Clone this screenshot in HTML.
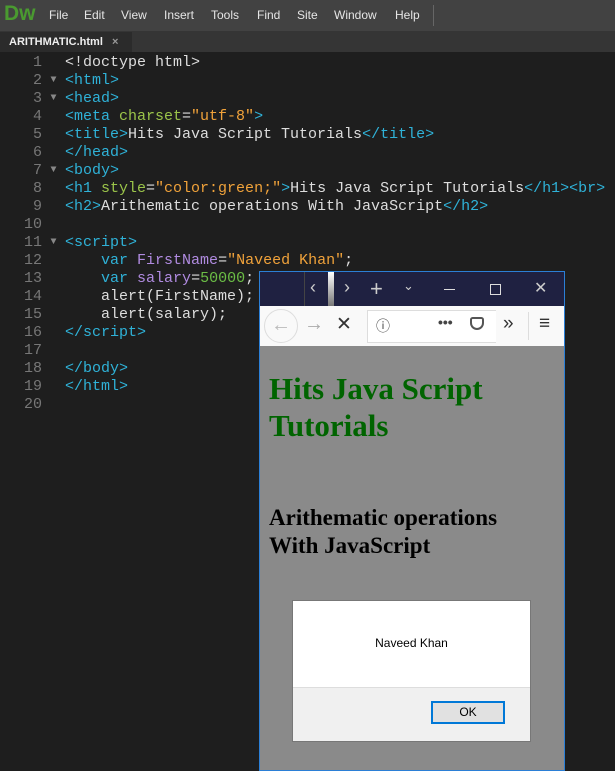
<!DOCTYPE html>
<html><head><style>
body{margin:0;width:615px;height:766px;background:#1e1e1e;position:relative;overflow:hidden;font-family:"Liberation Sans",sans-serif}
.menu{position:absolute;left:0;top:0;width:615px;height:31px;background:#424242}
.menu span{position:absolute;top:8px;font-size:12px;color:#e6e6e6}
.tabs{position:absolute;top:31px;left:0;width:615px;height:21px;background:#353535}
.tab{position:absolute;left:0;top:1px;width:132px;height:20px;background:#2b2b2b;color:#eee;font-size:11px;font-weight:bold;line-height:20px;padding-left:9px;box-sizing:border-box}
.code{position:absolute;left:0;top:54px;font-family:"Liberation Mono",monospace;font-size:15px;color:#ddd}
.code div{height:18px;line-height:18px;white-space:pre}
.ln{display:inline-block;width:42px;text-align:right;color:#777}
.ar{display:inline-block;width:23px;height:18px;color:#888;font-size:10px;line-height:18px;text-align:center;vertical-align:top}
.t{color:#2fb2d8}.a{color:#9bc44a}.s{color:#f0a23a}.v{color:#b08be0}.n{color:#6bbd45}
.win{position:absolute;left:259px;top:271px;width:306px;height:500px;border:1px solid #2b7fd6;box-sizing:border-box;background:#8a8a8a;overflow:hidden}
.tb{position:absolute;left:0;top:0;width:100%;height:34px;background:#1f2141}
.nav{position:absolute;left:0;top:34px;width:100%;height:40px;background:#f9f9f9}
.ic{position:absolute;color:#ccc;font-size:18px}
h1,h2{font-family:"Liberation Serif",serif;margin:0;position:absolute;left:9px}
.dlg{position:absolute;left:292px;top:600px;width:239px;height:142px;background:#f0f0f0;border:1px solid #777;box-sizing:border-box}
</style></head><body>
<div class="menu">
<span style="left:4px;top:2px;font-size:21px;color:#4a9a30;font-weight:bold">Dw</span>
<span style="left:49px">File</span><span style="left:84px">Edit</span><span style="left:121px">View</span><span style="left:164px">Insert</span><span style="left:211px">Tools</span><span style="left:257px">Find</span><span style="left:297px">Site</span><span style="left:334px">Window</span><span style="left:395px">Help</span>
<div style="position:absolute;left:433px;top:5px;width:1px;height:21px;background:#666"></div>
</div>
<div class="tabs"><div class="tab">ARITHMATIC.html <span style="color:#999;margin-left:6px">×</span></div></div>
<div class="code"><div><span class="ln">1</span><span class="ar"></span>&lt;!doctype html&gt;</div>
<div><span class="ln">2</span><span class="ar">▼</span><span class="t">&lt;html&gt;</span></div>
<div><span class="ln">3</span><span class="ar">▼</span><span class="t">&lt;head&gt;</span></div>
<div><span class="ln">4</span><span class="ar"></span><span class="t">&lt;meta </span><span class="a">charset</span>=<span class="s">"utf-8"</span><span class="t">&gt;</span></div>
<div><span class="ln">5</span><span class="ar"></span><span class="t">&lt;title&gt;</span>Hits Java Script Tutorials<span class="t">&lt;/title&gt;</span></div>
<div><span class="ln">6</span><span class="ar"></span><span class="t">&lt;/head&gt;</span></div>
<div><span class="ln">7</span><span class="ar">▼</span><span class="t">&lt;body&gt;</span></div>
<div><span class="ln">8</span><span class="ar"></span><span class="t">&lt;h1 </span><span class="a">style</span>=<span class="s">"color:green;"</span><span class="t">&gt;</span>Hits Java Script Tutorials<span class="t">&lt;/h1&gt;&lt;br&gt;</span></div>
<div><span class="ln">9</span><span class="ar"></span><span class="t">&lt;h2&gt;</span>Arithematic operations With JavaScript<span class="t">&lt;/h2&gt;</span></div>
<div><span class="ln">10</span><span class="ar"></span></div>
<div><span class="ln">11</span><span class="ar">▼</span><span class="t">&lt;script&gt;</span></div>
<div><span class="ln">12</span><span class="ar"></span>    <span class="t">var</span> <span class="v">FirstName</span>=<span class="s">"Naveed Khan"</span>;</div>
<div><span class="ln">13</span><span class="ar"></span>    <span class="t">var</span> <span class="v">salary</span>=<span class="n">50000</span>;</div>
<div><span class="ln">14</span><span class="ar"></span>    alert(FirstName);</div>
<div><span class="ln">15</span><span class="ar"></span>    alert(salary);</div>
<div><span class="ln">16</span><span class="ar"></span><span class="t">&lt;/script&gt;</span></div>
<div><span class="ln">17</span><span class="ar"></span></div>
<div><span class="ln">18</span><span class="ar"></span><span class="t">&lt;/body&gt;</span></div>
<div><span class="ln">19</span><span class="ar"></span><span class="t">&lt;/html&gt;</span></div>
<div><span class="ln">20</span><span class="ar"></span></div></div>
<div class="win">
<div class="tb">
<div style="position:absolute;left:44px;top:0;width:1px;height:34px;background:#444"></div>
<div style="position:absolute;left:68px;top:0;width:6px;height:34px;background:linear-gradient(#fff,#777)"></div>
<span class="ic" style="left:50px;top:5px">‹</span><span class="ic" style="left:84px;top:5px">›</span>
<span class="ic" style="left:110px;top:4px;font-size:22px">+</span><span class="ic" style="left:143px;top:6px;font-size:13px">⌄</span>
<div style="position:absolute;left:184px;top:17px;width:11px;height:1px;background:#ddd"></div>
<div style="position:absolute;left:230px;top:12px;width:9px;height:9px;border:1px solid #ddd"></div>
<span class="ic" style="left:274px;top:6px;font-size:16px">✕</span>
</div>
<div class="nav">
<div style="position:absolute;left:4px;top:3px;width:32px;height:32px;border:1px solid #ddd;border-radius:50%;color:#bbb;font-size:20px;text-align:center;line-height:30px">←</div>
<span style="position:absolute;left:44px;top:7px;color:#aaa;font-size:20px">→</span>
<span style="position:absolute;left:76px;top:7px;color:#333;font-size:19px">✕</span>
<div style="position:absolute;left:107px;top:4px;width:128px;height:31px;background:#fff;border:1px solid #ddd;border-right:none"></div>
<span style="position:absolute;left:116px;top:10px;font-size:14px;color:#444">ⓘ</span>
<span style="position:absolute;left:178px;top:8px;font-size:14px;color:#444;font-weight:bold">•••</span>
<div style="position:absolute;left:210px;top:11px;width:14px;height:13px;border:2px solid #555;border-radius:3px 3px 8px 8px;box-sizing:border-box"></div>
<span style="position:absolute;left:243px;top:7px;font-size:19px;color:#333">»</span>
<div style="position:absolute;left:268px;top:6px;width:1px;height:28px;background:#ddd"></div>
<span style="position:absolute;left:279px;top:7px;font-size:19px;color:#333">≡</span>
</div>
<h1 style="top:98px;color:#006400;font-size:31px;line-height:37px;width:290px">Hits Java Script Tutorials</h1>
<h2 style="top:232px;color:#000;font-size:23px;line-height:28px;width:245px">Arithematic operations With JavaScript</h2>
</div>
<div class="dlg">
<div style="position:absolute;left:0;top:0;width:100%;height:86px;background:#fff;border-bottom:1px solid #ddd"></div>
<div style="position:absolute;left:0;top:35px;width:100%;text-align:center;font-size:12px;color:#000">Naveed Khan</div>
<div style="position:absolute;left:138px;top:100px;width:74px;height:23px;background:#e1e1e1;border:2px solid #0078d7;box-sizing:border-box;text-align:center;font-size:12px;line-height:19px">OK</div>
</div>
</body></html>
